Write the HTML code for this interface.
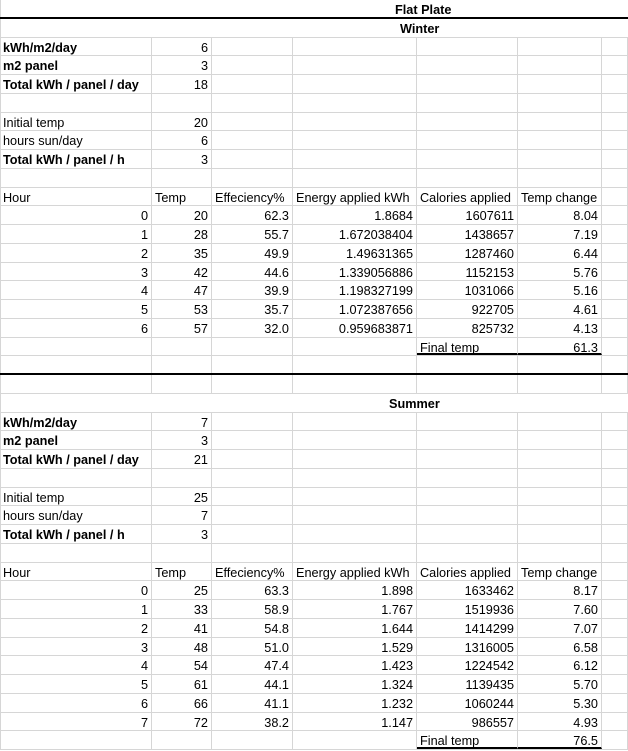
<!DOCTYPE html>
<html><head><meta charset="utf-8"><style>
body{margin:0;width:628px;height:750px;overflow:hidden;background:#fff;font-family:"Liberation Sans",Arial,sans-serif;font-size:12.7px;color:#000;position:relative}
.r{position:absolute;left:0;width:628px;height:18.75px;box-sizing:border-box;border-bottom:1px solid #d6d6d6}
.c{position:absolute;top:0;height:100%;box-sizing:border-box;border-right:1px solid #d6d6d6;line-height:20px;white-space:nowrap;padding:0 3px;overflow:visible}
.n{text-align:right}
.b{font-weight:bold}
.m{position:absolute;top:0;line-height:20px;font-weight:bold}
</style></head><body>
<div style="position:absolute;left:0;top:0;width:1px;height:750px;background:#d6d6d6"></div>
<script>
const X=[0,152,212,293,417,518,602,628];
const rows=[];
function R(cells,opt){rows.push({cells,opt:opt||{}});}
const E=()=>R([]);
function block(season,a,b,tot,init,hrs,toth,data,fin){
 R(null,{merge:season});
 R([['kWh/m2/day','b'],[a,'n']]);
 R([['m2 panel','b'],[b,'n']]);
 R([['Total kWh / panel / day','b'],[tot,'n']]);
 E();
 R([['Initial temp'],[init,'n']]);
 R([['hours sun/day'],[hrs,'n']]);
 R([['Total kWh / panel / h','b'],[toth,'n']]);
 E();
 R([['Hour'],['Temp'],['Effeciency%'],['Energy applied kWh'],['Calories applied'],['Temp change']]);
 data.forEach(d=>R(d.map(v=>[v,'n'])));
 R([[''],[''],[''],[''],['Final temp'],[fin,'n']],{fin:1});
}
R(null,{merge:'Flat Plate',thick:1});
block('Winter',6,3,18,20,6,3,[
[0,20,'62.3','1.8684',1607611,'8.04'],
[1,28,'55.7','1.672038404',1438657,'7.19'],
[2,35,'49.9','1.49631365',1287460,'6.44'],
[3,42,'44.6','1.339056886',1152153,'5.76'],
[4,47,'39.9','1.198327199',1031066,'5.16'],
[5,53,'35.7','1.072387656',922705,'4.61'],
[6,57,'32.0','0.959683871',825732,'4.13']],'61.3');
R([],{thick:1});
E();
block('Summer',7,3,21,25,7,3,[
[0,25,'63.3','1.898',1633462,'8.17'],
[1,33,'58.9','1.767',1519936,'7.60'],
[2,41,'54.8','1.644',1414299,'7.07'],
[3,48,'51.0','1.529',1316005,'6.58'],
[4,54,'47.4','1.423',1224542,'6.12'],
[5,61,'44.1','1.324',1139435,'5.70'],
[6,66,'41.1','1.232',1060244,'5.30'],
[7,72,'38.2','1.147',986557,'4.93']],'76.5');
let h='';
rows.forEach((r,i)=>{
 const top=i*18.75;
 let st=`top:${top}px;`;
 if(r.opt.thick) st+='border-bottom:2px solid #000;';
 h+=`<div class="r" style="${st}">`;
 if(r.cells===null){
  h+=`<div class="m" style="left:${r.opt.merge==='Flat Plate'?395:(r.opt.merge==='Winter'?400:389)}px">${r.opt.merge}</div>`;
 } else {
  for(let k=0;k<7;k++){
   const c=r.cells[k];
   let cs=`left:${X[k]}px;width:${X[k+1]-X[k]}px;`;
   if(r.opt.fin&&(k==4||k==5)) cs+='border-bottom:2px solid #000;';
   let cls='c';
   if(c&&c[1]) cls+=' '+c[1];
   h+=`<div class="${cls}" style="${cs}">${c?c[0]:''}</div>`;
  }
 }
 h+='</div>';
});
document.write(h);
</script>
</body></html>
